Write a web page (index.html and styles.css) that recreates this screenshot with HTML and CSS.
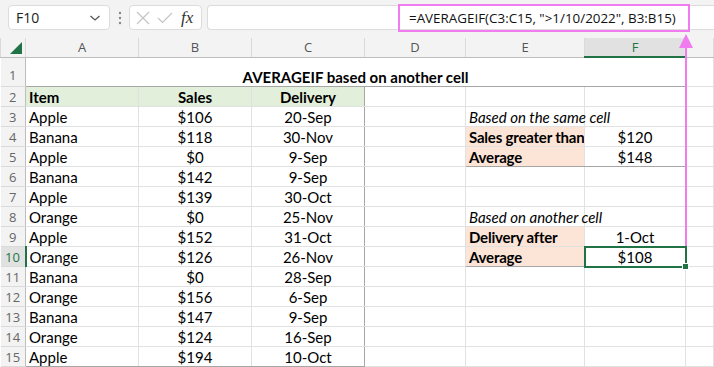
FILE: index.html
```html
<!DOCTYPE html>
<html lang="en">
<head>
  <meta charset="UTF-8" />
  <title>AVERAGEIF based on another cell</title>
  <link rel="stylesheet" href="styles.css">
</head>
<body>
  <div class="toolbar">
    <div class="namebox">
      <span>F10</span>
      <svg class="chev" width="12" height="8" viewBox="0 0 12 8"><path d="M1.5 2 L6 6 L10.5 2" fill="none" stroke="#555" stroke-width="1.3"/></svg>
    </div>
    <svg class="dots" width="4" height="14" viewBox="0 0 4 14"><circle cx="2" cy="2" r="1.2" fill="#888"/><circle cx="2" cy="7" r="1.2" fill="#888"/><circle cx="2" cy="12" r="1.2" fill="#888"/></svg>
    <div class="fbtns">
      <svg width="14" height="14" viewBox="0 0 14 14"><path d="M1 1 L13 13 M13 1 L1 13" stroke="#c4c4c4" stroke-width="1.2"/></svg>
      <svg width="16" height="12" viewBox="0 0 16 12"><path d="M1 6 L5.5 10.5 L15 1" fill="none" stroke="#c4c4c4" stroke-width="1.2"/></svg>
      <span class="fx">fx</span>
    </div>
    <div class="formula">
      <span class="formula-hl">=AVERAGEIF(C3:C15, "&gt;1/10/2022", B3:B15)</span>
    </div>
  </div>

  <div class="sheet">
    <table class="grid">
      <colgroup>
        <col class="c-rh"><col class="c-a"><col class="c-b"><col class="c-c"><col class="c-d"><col class="c-e"><col class="c-f"><col>
      </colgroup>
      <tr class="hdr">
        <th class="corner"><span class="tri"></span></th>
        <th>A</th><th>B</th><th>C</th><th>D</th><th>E</th><th class="sel">F</th><th></th>
      </tr>
      <tr class="r1">
        <th class="rh">1</th>
        <td colspan="6" class="title">AVERAGEIF based on another cell</td>
        <td></td>
      </tr>
      <tr>
        <th class="rh">2</th>
        <td class="head tl">Item</td><td class="head">Sales</td><td class="head tr-edge">Delivery</td>
        <td></td><td></td><td></td><td></td>
      </tr>
      <tr>
        <th class="rh">3</th>
        <td>Apple</td><td class="num">$106</td><td class="num tr-edge">20-Sep</td>
        <td></td><td class="note">Based on the same cell</td><td></td><td></td>
      </tr>
      <tr>
        <th class="rh">4</th>
        <td>Banana</td><td class="num">$118</td><td class="num tr-edge">30-Nov</td>
        <td></td><td class="lbl bx-top bx-left">Sales greater than</td><td class="num bx-top bx-right">$120</td><td></td>
      </tr>
      <tr>
        <th class="rh">5</th>
        <td>Apple</td><td class="num">$0</td><td class="num tr-edge">9-Sep</td>
        <td></td><td class="lbl bx-bottom bx-left">Average</td><td class="num bx-bottom bx-right">$148</td><td></td>
      </tr>
      <tr>
        <th class="rh">6</th>
        <td>Banana</td><td class="num">$142</td><td class="num tr-edge">9-Sep</td>
        <td></td><td></td><td></td><td></td>
      </tr>
      <tr>
        <th class="rh">7</th>
        <td>Apple</td><td class="num">$139</td><td class="num tr-edge">30-Oct</td>
        <td></td><td></td><td></td><td></td>
      </tr>
      <tr>
        <th class="rh">8</th>
        <td>Orange</td><td class="num">$0</td><td class="num tr-edge">25-Nov</td>
        <td></td><td class="note">Based on another cell</td><td></td><td></td>
      </tr>
      <tr>
        <th class="rh">9</th>
        <td>Apple</td><td class="num">$152</td><td class="num tr-edge">31-Oct</td>
        <td></td><td class="lbl bx-top bx-left">Delivery after</td><td class="num bx-top bx-right">1-Oct</td><td></td>
      </tr>
      <tr>
        <th class="rh sel">10</th>
        <td>Orange</td><td class="num">$126</td><td class="num tr-edge">26-Nov</td>
        <td></td><td class="lbl bx-bottom bx-left">Average</td><td class="num bx-bottom bx-right active">$108<span class="handle"></span></td><td></td>
      </tr>
      <tr>
        <th class="rh">11</th>
        <td>Banana</td><td class="num">$0</td><td class="num tr-edge">28-Sep</td>
        <td></td><td></td><td></td><td></td>
      </tr>
      <tr>
        <th class="rh">12</th>
        <td>Orange</td><td class="num">$156</td><td class="num tr-edge">6-Sep</td>
        <td></td><td></td><td></td><td></td>
      </tr>
      <tr>
        <th class="rh">13</th>
        <td>Banana</td><td class="num">$147</td><td class="num tr-edge">9-Sep</td>
        <td></td><td></td><td></td><td></td>
      </tr>
      <tr>
        <th class="rh">14</th>
        <td>Orange</td><td class="num">$124</td><td class="num tr-edge">16-Sep</td>
        <td></td><td></td><td></td><td></td>
      </tr>
      <tr class="last">
        <th class="rh">15</th>
        <td>Apple</td><td class="num">$194</td><td class="num tr-edge">10-Oct</td>
        <td></td><td></td><td></td><td></td>
      </tr>
    </table>

    <!-- pink pointer from F10 up to the formula -->
    <div class="pointer"><span class="pointer-head"></span></div>
  </div>
</body>
</html>
```

FILE: styles.css
```css
html, body {
  margin: 0;
  padding: 0;
  background: #fff;
  width: 714px;
  height: 367px;
  overflow: hidden;
}

body {
  font-family: Lato, "Open Sans", sans-serif;
  color: #000;
  position: relative;
}

/* formula bar */
.toolbar {
  height: 38px;
  background: #f3f3f3;
  display: flex;
  align-items: flex-start;
  padding: 5px 0 0 8px;
  box-sizing: border-box;
}

.namebox {
  width: 102px;
  height: 25px;
  box-sizing: border-box;
  background: #fff;
  border: 1px solid #dcdcdc;
  border-radius: 4px;
  display: flex;
  align-items: center;
  justify-content: space-between;
  padding: 0 8px 0 7px;
  font-family: "Open Sans", sans-serif;
  font-size: 14px;
  color: #222;
}

.dots {
  margin: 6px 7px 0 8px;
}

.fbtns {
  width: 73px;
  height: 25px;
  box-sizing: border-box;
  background: #fff;
  border: 1px solid #dcdcdc;
  border-radius: 4px;
  display: flex;
  align-items: center;
  gap: 7px;
  padding: 0 0 0 6px;
}

.fx {
  font-family: "Liberation Serif", serif;
  font-style: italic;
  font-size: 17px;
  color: #333;
  margin-left: 1px;
  line-height: 1;
}

.formula {
  flex: 1;
  margin-left: 5px;
  height: 25px;
  box-sizing: border-box;
  background: #fff;
  border: 1px solid #dcdcdc;
  border-right: none;
  border-radius: 4px 0 0 4px;
  position: relative;
}

.formula-hl {
  position: absolute;
  left: 190px;
  top: -2px;
  width: 292px;
  height: 28px;
  box-sizing: border-box;
  border: 2px solid #f07cf0;
  padding-left: 9px;
  font-family: "Open Sans", sans-serif;
  font-size: 13.4px;
  line-height: 25px;
  color: #111;
  white-space: nowrap;
}

/* sheet grid */
.sheet {
  position: relative;
}

.grid {
  border-collapse: collapse;
  table-layout: fixed;
  width: 714px;
  font-size: 15px;
}

.c-rh { width: 25px; }
.c-a, .c-b, .c-c { width: 113px; }
.c-d { width: 101px; }
.c-e { width: 119px; }
.c-f { width: 101px; }

.grid td, .grid th {
  border: 1px solid #e1e1e1;
  padding: 0 3px;
  height: 19px;
  line-height: 18px;
  white-space: nowrap;
  overflow: hidden;
}

.grid .hdr th {
  height: 18px;
  background: #f3f3f3;
  font-family: "Open Sans", sans-serif;
  font-weight: normal;
  font-size: 13px;
  color: #555;
  border-top: none;
  border-color: #dadada;
  border-bottom: 1px solid #bdbdbd;
}

.grid .hdr th.sel {
  background: #e1e1e1;
  color: #217346;
  border-bottom: 2px solid #217346;
}

.corner {
  position: relative;
}

.tri {
  position: absolute;
  right: 3px;
  bottom: 3px;
  width: 0;
  height: 0;
  border-left: 12px solid transparent;
  border-bottom: 12px solid #217346;
}

.grid th.rh {
  background: #f3f3f3;
  font-family: "Open Sans", sans-serif;
  font-weight: normal;
  font-size: 13px;
  color: #666;
  text-align: center;
  padding: 0;
  border-left: none;
  border-color: #dadada;
  border-right: 1px solid #bdbdbd;
}

.grid th.rh.sel {
  background: #e1e1e1;
  color: #217346;
  border-right: 2px solid #217346;
}

.r1 td, .r1 th {
  height: 28px;
}

.r1 th.rh {
  vertical-align: bottom;
  line-height: 22px;
}

.title {
  text-align: center;
  font-weight: bold;
  vertical-align: bottom;
  line-height: 24px;
  border-bottom: 1px solid #a6a6a6 !important;
}

.head {
  background: #e2efda;
  font-weight: bold;
  text-align: center;
}

.head.tl {
  text-align: left;
}

.num {
  text-align: center;
}

.tr-edge {
  border-right: 1px solid #a6a6a6 !important;
}

.last td:nth-child(2),
.last td:nth-child(3),
.last td:nth-child(4) {
  border-bottom: 1px solid #a6a6a6;
}

.grid td.note {
  font-style: italic;
  overflow: visible;
  position: relative;
  z-index: 1;
}

.grid td.lbl {
  background: #fce4d6;
  font-weight: bold;
  padding-right: 0;
  letter-spacing: -0.2px;
}

.bx-top { border-top: 1px solid #a6a6a6 !important; }
.bx-bottom { border-bottom: 1px solid #a6a6a6 !important; }
.bx-left { border-left: 1px solid #a6a6a6 !important; }
.bx-right { border-right: 1px solid #a6a6a6 !important; }

.grid td.active {
  position: relative;
  overflow: visible;
  outline: 2px solid #217346;
  outline-offset: -1px;
}

.handle {
  position: absolute;
  right: -4px;
  bottom: -4px;
  width: 5px;
  height: 5px;
  background: #217346;
  border: 1px solid #fff;
}

/* pink pointer line */
.pointer {
  position: absolute;
  left: 685px;
  top: 9px;
  width: 2px;
  height: 199px;
  background: #f07cf0;
}

.pointer-head {
  position: absolute;
  left: -6px;
  top: -13px;
  width: 0;
  height: 0;
  border-left: 7px solid transparent;
  border-right: 7px solid transparent;
  border-bottom: 14px solid #f07cf0;
}
```
